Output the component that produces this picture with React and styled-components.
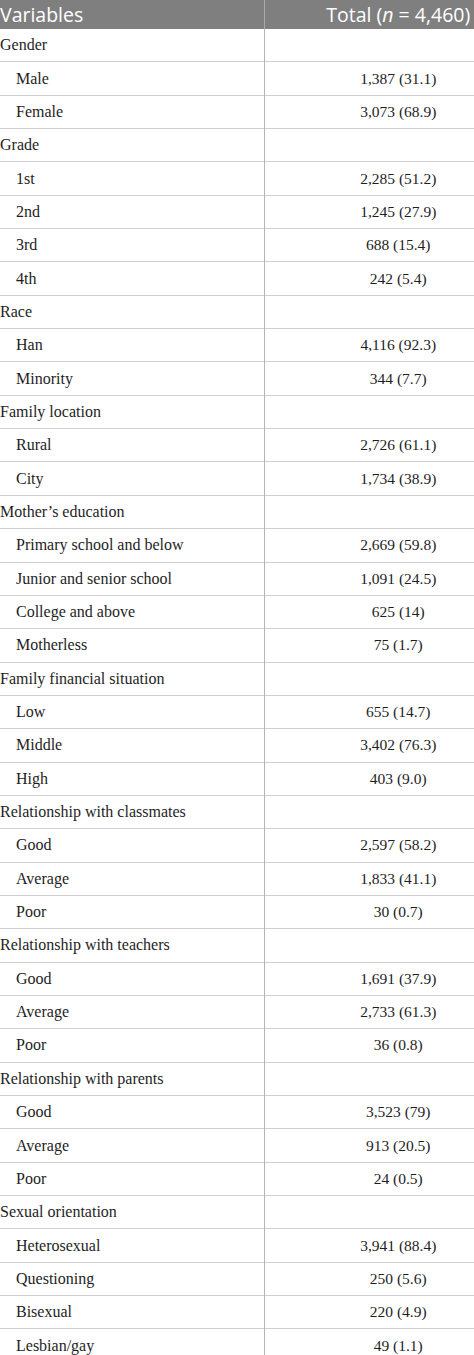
import React from "react";
import styled, { createGlobalStyle } from "styled-components";

const GlobalStyle = createGlobalStyle`
  body {
    margin: 0;
    background: #fff;
    overflow: hidden;
  }
`;

const Frame = styled.div`
  width: 474px;
  overflow: hidden;
`;

const Table = styled.table`
  width: 532px;
  border-collapse: collapse;
  table-layout: fixed;
`;

const HeadCell = styled.th`
  height: 29px;
  padding: 0;
  background: #7f7f7f;
  color: #fff;
  font-family: "Open Sans", sans-serif;
  font-weight: 400;
  font-size: 19.5px;
  text-align: ${(p) => (p.$center ? "center" : "left")};
  border-right: ${(p) => (p.$center ? "none" : "1px solid #a9a9a9")};
  vertical-align: middle;
  white-space: nowrap;
  line-height: 1;
`;

const Row = styled.tr`
  border-bottom: 1px solid #cfcfcf;
`;

const LabelCell = styled.td`
  height: 32.35px;
  padding: 0 0 0 ${(p) => (p.$indent ? "16px" : "0")};
  font-family: "Liberation Serif", "Times New Roman", serif;
  font-size: 16px;
  color: #1e1e1e;
  border-right: 1px solid #b5b5b5;
  vertical-align: middle;
  white-space: nowrap;
`;

const ValueCell = styled.td`
  padding: 0;
  font-family: "Liberation Serif", "Times New Roman", serif;
  font-size: 15.5px;
  color: #1e1e1e;
  text-align: center;
  vertical-align: middle;
  white-space: nowrap;
`;

const groups = [
  ["Gender", [["Male", "1,387 (31.1)"], ["Female", "3,073 (68.9)"]]],
  [
    "Grade",
    [
      ["1st", "2,285 (51.2)"],
      ["2nd", "1,245 (27.9)"],
      ["3rd", "688 (15.4)"],
      ["4th", "242 (5.4)"],
    ],
  ],
  ["Race", [["Han", "4,116 (92.3)"], ["Minority", "344 (7.7)"]]],
  ["Family location", [["Rural", "2,726 (61.1)"], ["City", "1,734 (38.9)"]]],
  [
    "Mother’s education",
    [
      ["Primary school and below", "2,669 (59.8)"],
      ["Junior and senior school", "1,091 (24.5)"],
      ["College and above", "625 (14)"],
      ["Motherless", "75 (1.7)"],
    ],
  ],
  [
    "Family financial situation",
    [
      ["Low", "655 (14.7)"],
      ["Middle", "3,402 (76.3)"],
      ["High", "403 (9.0)"],
    ],
  ],
  [
    "Relationship with classmates",
    [
      ["Good", "2,597 (58.2)"],
      ["Average", "1,833 (41.1)"],
      ["Poor", "30 (0.7)"],
    ],
  ],
  [
    "Relationship with teachers",
    [
      ["Good", "1,691 (37.9)"],
      ["Average", "2,733 (61.3)"],
      ["Poor", "36 (0.8)"],
    ],
  ],
  [
    "Relationship with parents",
    [
      ["Good", "3,523 (79)"],
      ["Average", "913 (20.5)"],
      ["Poor", "24 (0.5)"],
    ],
  ],
  [
    "Sexual orientation",
    [
      ["Heterosexual", "3,941 (88.4)"],
      ["Questioning", "250 (5.6)"],
      ["Bisexual", "220 (4.9)"],
      ["Lesbian/gay", "49 (1.1)"],
    ],
  ],
];

export default function App() {
  return (
    <Frame>
      <GlobalStyle />
      <Table>
        <colgroup>
          <col style={{ width: 264 }} />
          <col />
        </colgroup>
        <thead>
          <tr>
            <HeadCell>Variables</HeadCell>
            <HeadCell $center>
              Total (<i>n</i> = 4,460)
            </HeadCell>
          </tr>
        </thead>
        <tbody>
          {groups.map(([title, items]) => (
            <React.Fragment key={title}>
              <Row>
                <LabelCell>{title}</LabelCell>
                <ValueCell />
              </Row>
              {items.map(([label, value]) => (
                <Row key={title + label}>
                  <LabelCell $indent>{label}</LabelCell>
                  <ValueCell>{value}</ValueCell>
                </Row>
              ))}
            </React.Fragment>
          ))}
        </tbody>
      </Table>
    </Frame>
  );
}
